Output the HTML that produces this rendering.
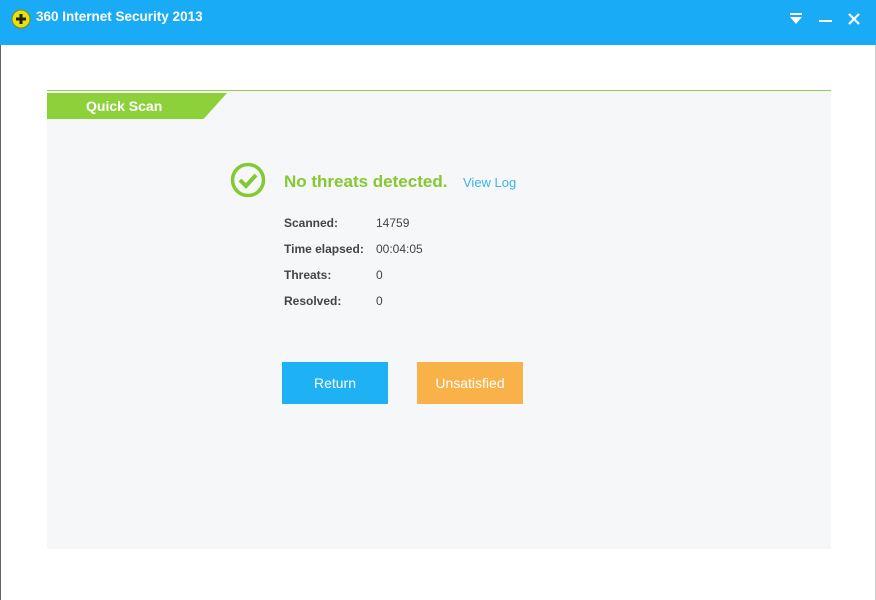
<!DOCTYPE html>
<html><head><style>
*{margin:0;padding:0;box-sizing:border-box}
body{width:876px;height:600px;background:#fff;font-family:"Liberation Sans",sans-serif;position:relative;overflow:hidden}
.tb{position:absolute;left:0;top:0;width:876px;height:45px;background:#19abf6}
.title{position:absolute;left:36px;top:9px;color:#fff;font-weight:bold;font-size:13.5px}
.panel{position:absolute;left:47px;top:90px;width:784px;height:459px;background:#f6f7f9;border-top:1px solid #8fd14a}
.tab{position:absolute;left:0;top:2px;width:180px;height:26px;background:#8dd13a;clip-path:polygon(0 0,100% 0,87% 100%,0 100%);color:#fff;font-weight:bold;font-size:14px;padding:5px 0 0 39px}
.msg{position:absolute;left:284px;top:172px;color:#84c832;font-weight:bold;font-size:17px}
.log{position:absolute;left:463px;top:175px;color:#3cb4e8;font-size:13px}
.row{position:absolute;left:284px;font-size:12px;color:#444}
.row b{display:inline-block;width:92px}
.btn{position:absolute;top:362px;width:106px;height:42px;color:#fff;font-size:14px;text-align:center;line-height:42px}
</style></head><body>
<div style="position:absolute;left:0;top:0;width:1px;height:600px;background:#666"></div>
<div style="position:absolute;right:0;top:0;width:1px;height:600px;background:#ccc"></div>
<div class="tb">
<svg style="position:absolute;left:11px;top:9px" width="20" height="20" viewBox="0 0 20 20"><circle cx="10" cy="10" r="9" fill="#e8e010" stroke="#7a8a10" stroke-width="1"/><path d="M10 5v10M5 10h10" stroke="#222" stroke-width="3"/></svg>
<div class="title">360 Internet Security 2013</div>
<svg style="position:absolute;left:789px;top:12px" width="14" height="14"><rect x="1" y="1" width="12" height="2" fill="#fff"/><path d="M1 5h12l-6 7z" fill="#fff"/></svg>
<div style="position:absolute;left:819px;top:20px;width:13px;height:2px;background:#fff"></div>
<svg style="position:absolute;left:847px;top:12px" width="14" height="14"><path d="M2 2l10 10M12 2L2 12" stroke="#fff" stroke-width="2.2"/></svg>
</div>
<div class="panel"><div class="tab">Quick Scan</div></div>
<svg style="position:absolute;left:230px;top:162px" width="36" height="36" viewBox="0 0 36 36"><circle cx="18" cy="18" r="15.5" fill="none" stroke="#84c832" stroke-width="3.5"/><path d="M10 18l6 6 10-11" fill="none" stroke="#84c832" stroke-width="4"/></svg>
<div class="msg">No threats detected.</div>
<div class="log">View Log</div>
<div class="row" style="top:216px"><b>Scanned:</b>14759</div>
<div class="row" style="top:242px"><b>Time elapsed:</b>00:04:05</div>
<div class="row" style="top:268px"><b>Threats:</b>0</div>
<div class="row" style="top:294px"><b>Resolved:</b>0</div>
<div class="btn" style="left:282px;background:#1eb1f4">Return</div>
<div class="btn" style="left:417px;background:#f9b14a">Unsatisfied</div>
</body></html>
